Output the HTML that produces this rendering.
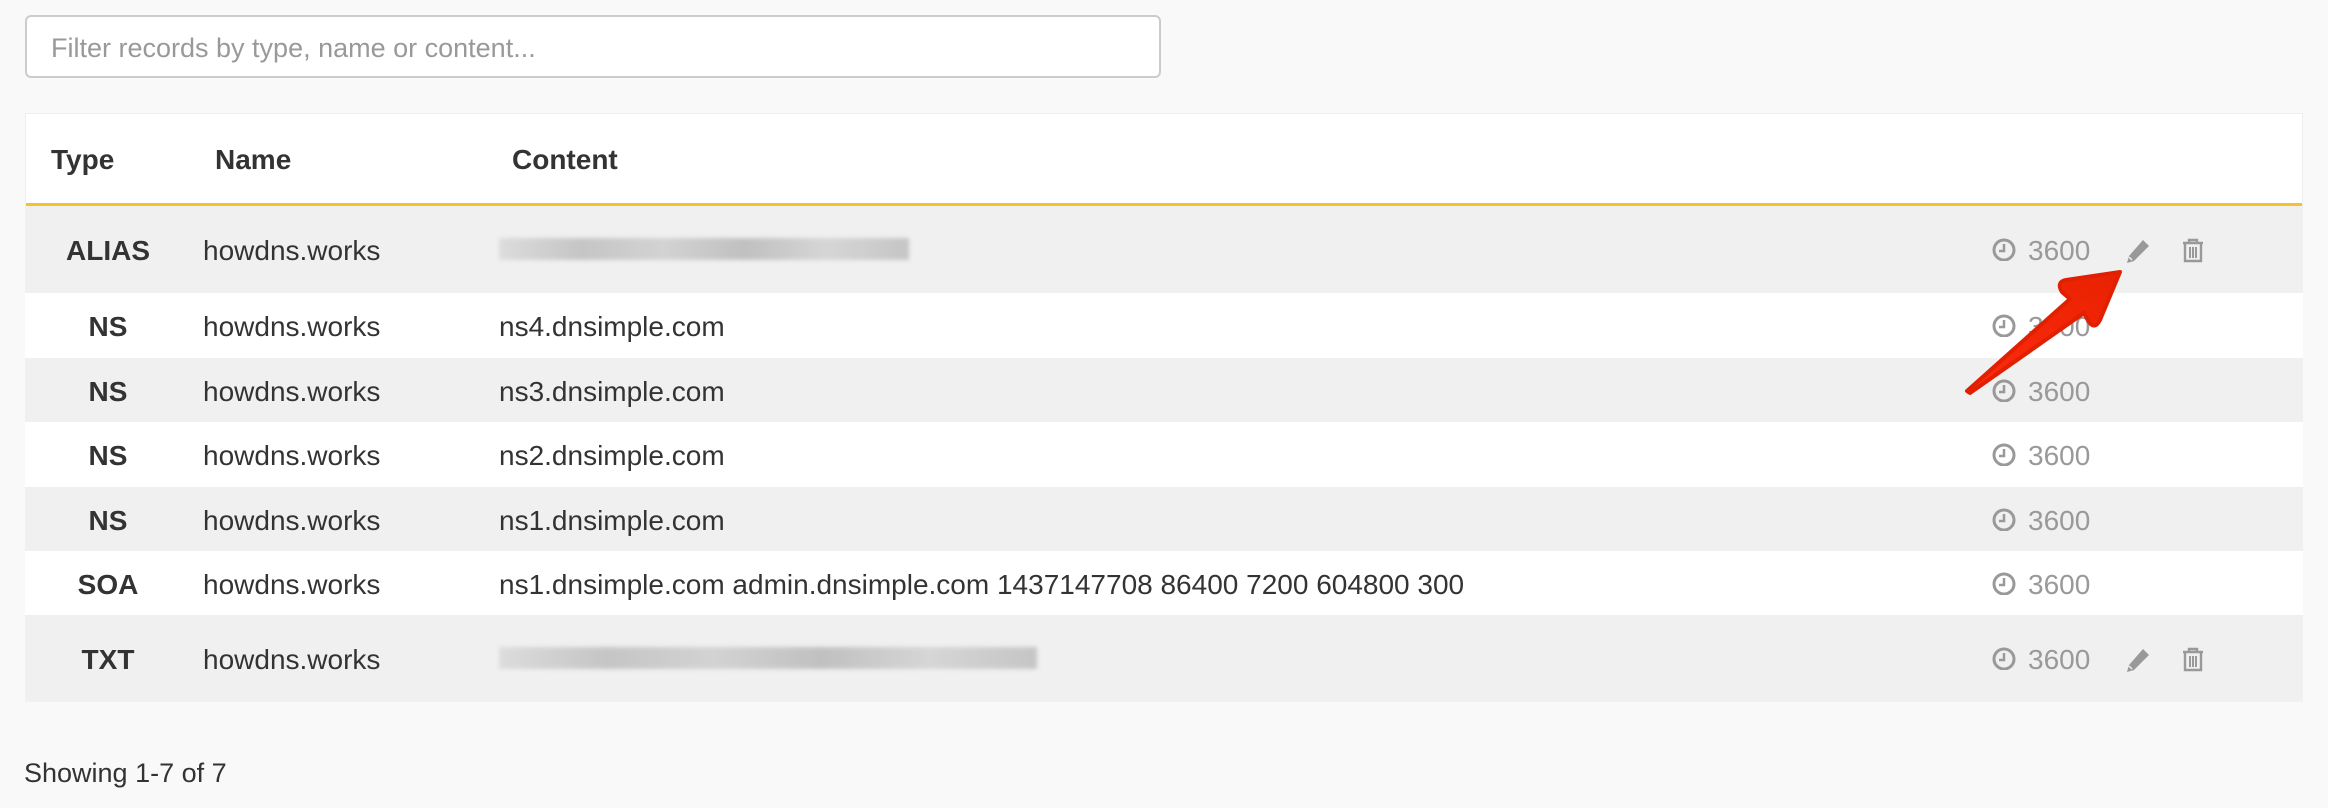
<!DOCTYPE html>
<html><head><meta charset="utf-8"><style>
body{margin:0;width:2328px;height:808px;background:#f9f9f9;font-family:"Liberation Sans",Arial,sans-serif;position:relative;overflow:hidden;color:#333}
.inp{position:absolute;left:25px;top:15px;width:1136px;height:63px;border:2px solid #ccc;border-radius:6px;background:#fff;box-sizing:border-box;}
.inp span{position:absolute;left:24px;top:16px;font-size:27px;color:#999}
.tbl{position:absolute;left:25px;top:113px;width:2278px;height:589px;background:#fff;border:1px solid #eee;box-sizing:border-box}
.hdr{position:absolute;top:0;left:0;right:0;height:89px;border-bottom:4px solid #f4c22b;}
.hdr b{position:absolute;top:30px;font-size:28px;}
.row{position:absolute;left:0;right:0;font-size:28px}
.row .t{position:absolute;left:0;width:166px;text-align:center;font-weight:bold}
.row .n{position:absolute;left:178px}
.row .c{position:absolute;left:474px}
.ttl{position:absolute;left:1966px;color:#999}
.ttl svg{position:absolute;left:0;top:0}
.ttl span{position:absolute;left:37px}
.blur{position:absolute;left:474px;height:22px;background:linear-gradient(90deg,#d8d8d8,#bbb 20%,#ccc 40%,#b5b5b5 60%,#d0d0d0 80%,#bbb);filter:blur(2px);opacity:.8}
.foot{position:absolute;left:24px;top:758px;font-size:27px;color:#333}
</style></head><body>
<div class="inp"><span>Filter records by type, name or content...</span></div>
<div class="tbl">
<div class="hdr"><b style="left:25px">Type</b><b style="left:189px">Name</b><b style="left:486px">Content</b></div>
</div>
<div style="position:absolute;left:25px;top:206px;width:2278px;height:496px">
 <div class="row" style="top:0;height:87px;background:#f0f0f0"><div class="t" style="top:29px">ALIAS</div><div class="n" style="top:29px">howdns.works</div><div class="blur" style="top:32px;width:410px"></div>
  <div class="ttl" style="top:29px"><svg width="26" height="26"><circle cx="13" cy="15" r="10" fill="none" stroke="#999" stroke-width="3"/><path d="M13 9v7h-5" fill="none" stroke="#999" stroke-width="2.5"/></svg><span>3600</span></div>
  <svg style="position:absolute;left:2101px;top:33px" width="24" height="24"><path d="M17 1l6 6L8 22l-7 2 2-7z" fill="#999"/><path d="M3 18l3 3" stroke="#f0f0f0" stroke-width="1.5"/></svg>
  <svg style="position:absolute;left:2157px;top:32px" width="22" height="25"><path d="M1 5h20M7 5V2h8v3M3 5v18h16V5" fill="none" stroke="#999" stroke-width="2.4"/><path d="M8 9v11M11 9v11M14 9v11" stroke="#999" stroke-width="2"/></svg>
 </div>
 <div class="row" style="top:87px;height:65px;background:#fff"><div class="t" style="top:18px">NS</div><div class="n" style="top:18px">howdns.works</div><div class="c" style="top:18px">ns4.dnsimple.com</div><div class="ttl" style="top:18px"><svg width="26" height="26"><circle cx="13" cy="15" r="10" fill="none" stroke="#999" stroke-width="3"/><path d="M13 9v7h-5" fill="none" stroke="#999" stroke-width="2.5"/></svg><span>3600</span></div></div>
 <div class="row" style="top:152px;height:64px;background:#f0f0f0"><div class="t" style="top:18px">NS</div><div class="n" style="top:18px">howdns.works</div><div class="c" style="top:18px">ns3.dnsimple.com</div><div class="ttl" style="top:18px"><svg width="26" height="26"><circle cx="13" cy="15" r="10" fill="none" stroke="#999" stroke-width="3"/><path d="M13 9v7h-5" fill="none" stroke="#999" stroke-width="2.5"/></svg><span>3600</span></div></div>
 <div class="row" style="top:216px;height:65px;background:#fff"><div class="t" style="top:18px">NS</div><div class="n" style="top:18px">howdns.works</div><div class="c" style="top:18px">ns2.dnsimple.com</div><div class="ttl" style="top:18px"><svg width="26" height="26"><circle cx="13" cy="15" r="10" fill="none" stroke="#999" stroke-width="3"/><path d="M13 9v7h-5" fill="none" stroke="#999" stroke-width="2.5"/></svg><span>3600</span></div></div>
 <div class="row" style="top:281px;height:64px;background:#f0f0f0"><div class="t" style="top:18px">NS</div><div class="n" style="top:18px">howdns.works</div><div class="c" style="top:18px">ns1.dnsimple.com</div><div class="ttl" style="top:18px"><svg width="26" height="26"><circle cx="13" cy="15" r="10" fill="none" stroke="#999" stroke-width="3"/><path d="M13 9v7h-5" fill="none" stroke="#999" stroke-width="2.5"/></svg><span>3600</span></div></div>
 <div class="row" style="top:345px;height:64px;background:#fff"><div class="t" style="top:18px">SOA</div><div class="n" style="top:18px">howdns.works</div><div class="c" style="top:18px">ns1.dnsimple.com admin.dnsimple.com 1437147708 86400 7200 604800 300</div><div class="ttl" style="top:18px"><svg width="26" height="26"><circle cx="13" cy="15" r="10" fill="none" stroke="#999" stroke-width="3"/><path d="M13 9v7h-5" fill="none" stroke="#999" stroke-width="2.5"/></svg><span>3600</span></div></div>
 <div class="row" style="top:409px;height:87px;background:#f0f0f0"><div class="t" style="top:29px">TXT</div><div class="n" style="top:29px">howdns.works</div><div class="blur" style="top:32px;width:538px"></div>
  <div class="ttl" style="top:29px"><svg width="26" height="26"><circle cx="13" cy="15" r="10" fill="none" stroke="#999" stroke-width="3"/><path d="M13 9v7h-5" fill="none" stroke="#999" stroke-width="2.5"/></svg><span>3600</span></div>
  <svg style="position:absolute;left:2101px;top:33px" width="24" height="24"><path d="M17 1l6 6L8 22l-7 2 2-7z" fill="#999"/><path d="M3 18l3 3" stroke="#f0f0f0" stroke-width="1.5"/></svg>
  <svg style="position:absolute;left:2157px;top:32px" width="22" height="25"><path d="M1 5h20M7 5V2h8v3M3 5v18h16V5" fill="none" stroke="#999" stroke-width="2.4"/><path d="M8 9v11M11 9v11M14 9v11" stroke="#999" stroke-width="2"/></svg>
 </div>
</div>
<div class="foot">Showing 1-7 of 7</div>
<svg style="position:absolute;left:0;top:0" width="2328" height="808"><defs><linearGradient id="g" x1="0" y1="1" x2="1" y2="0"><stop offset="0" stop-color="#ff2a10"/><stop offset="1" stop-color="#e82200"/></linearGradient></defs>
<path d="M1967 391 L2070 299 L2062 292 Q2056 282 2066 280 L2120 272 L2100 320 Q2095 330 2089 322 L2084 313 L1970 393 Z" fill="url(#g)" stroke="#e02000" stroke-width="4" stroke-linejoin="round"/></svg>
</body></html>
